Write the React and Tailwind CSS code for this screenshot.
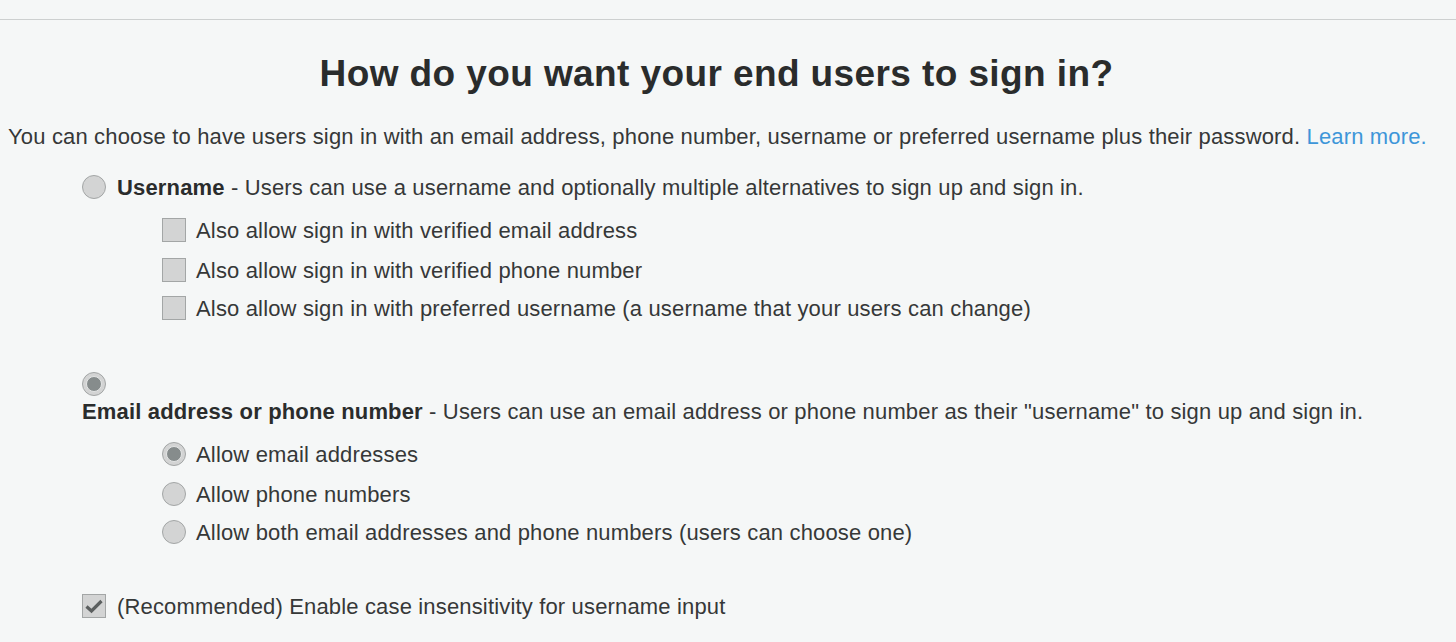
function Radio({ checked }) {
  return (
    <span className="flex h-[24px] w-[24px] flex-shrink-0 items-center justify-center rounded-full border-[1.5px] border-[#a3a6a6] bg-[#d3d4d4]">
      {checked && <span className="h-[16px] w-[16px] rounded-full border-[1.5px] border-[#e4e6e6] bg-[#868c8c]" />}
    </span>
  )
}

function Checkbox({ checked }) {
  return (
    <span className="flex h-[24px] w-[24px] flex-shrink-0 items-center justify-center border-[1.5px] border-[#a3a6a6] bg-[#d3d4d4]">
      {checked && (
        <svg width="20" height="20" viewBox="0 0 20 20">
          <path d="M2.5 10.5 L7.5 15 L17.5 5" fill="none" stroke="#5b5f5f" strokeWidth="3.2" />
        </svg>
      )}
    </span>
  )
}

function SubRow({ children, radio, checked, className }) {
  return (
    <div className={`flex h-[24px] items-center pl-[162px] ${className}`}>
      {radio ? <Radio checked={checked} /> : <Checkbox checked={checked} />}
      <span className="ml-[10px] pt-[2px]">{children}</span>
    </div>
  )
}

export default function App() {
  return (
    <div
      className="min-h-[642px] w-[1456px] bg-[#f5f7f7] text-[22px] leading-[24px] tracking-[0.16px] text-[#363838]"
      style={{ fontFamily: '"Liberation Sans", Arial, sans-serif' }}
    >
      <div className="h-[20px] border-b-[1.5px] border-[#cdd0d0]" />
      <div className="w-[1433px]">
        <h1 className="mt-[33px] text-center text-[37px] font-bold leading-[42px] tracking-[0.4px] text-[#2a2c2c]">
          How do you want your end users to sign in?
        </h1>
        <p className="mt-[30px] pl-[8px] whitespace-nowrap">
          You can choose to have users sign in with an email address, phone number, username or preferred username plus
          their password. <span className="text-[#3d96d9]">Learn more.</span>
        </p>
      </div>

      <div className="mt-[26px] flex h-[24px] items-center pl-[82px]">
        <Radio />
        <span className="ml-[11px] pt-[2px] whitespace-nowrap">
          <b className="text-[#2a2c2c]">Username</b> - Users can use a username and optionally multiple alternatives to
          sign up and sign in.
        </span>
      </div>
      <SubRow className="mt-[19px]">Also allow sign in with verified email address</SubRow>
      <SubRow className="mt-[16px]">Also allow sign in with verified phone number</SubRow>
      <SubRow className="mt-[14px]">
        Also allow sign in with preferred username (a username that your users can change)
      </SubRow>

      <div className="mt-[52px] pl-[82px]">
        <Radio checked />
      </div>
      <div className="mt-[4px] pl-[82px] whitespace-nowrap">
        <b className="text-[#2a2c2c]">Email address or phone number</b> - Users can use an email address or phone
        number as their "username" to sign up and sign in.
      </div>
      <SubRow radio checked className="mt-[18px]">
        Allow email addresses
      </SubRow>
      <SubRow radio className="mt-[16px]">
        Allow phone numbers
      </SubRow>
      <SubRow radio className="mt-[14px]">
        Allow both email addresses and phone numbers (users can choose one)
      </SubRow>

      <div className="mt-[50px] flex h-[24px] items-center pl-[82px]">
        <Checkbox checked />
        <span className="ml-[11px] pt-[2px]">(Recommended) Enable case insensitivity for username input</span>
      </div>
    </div>
  )
}
